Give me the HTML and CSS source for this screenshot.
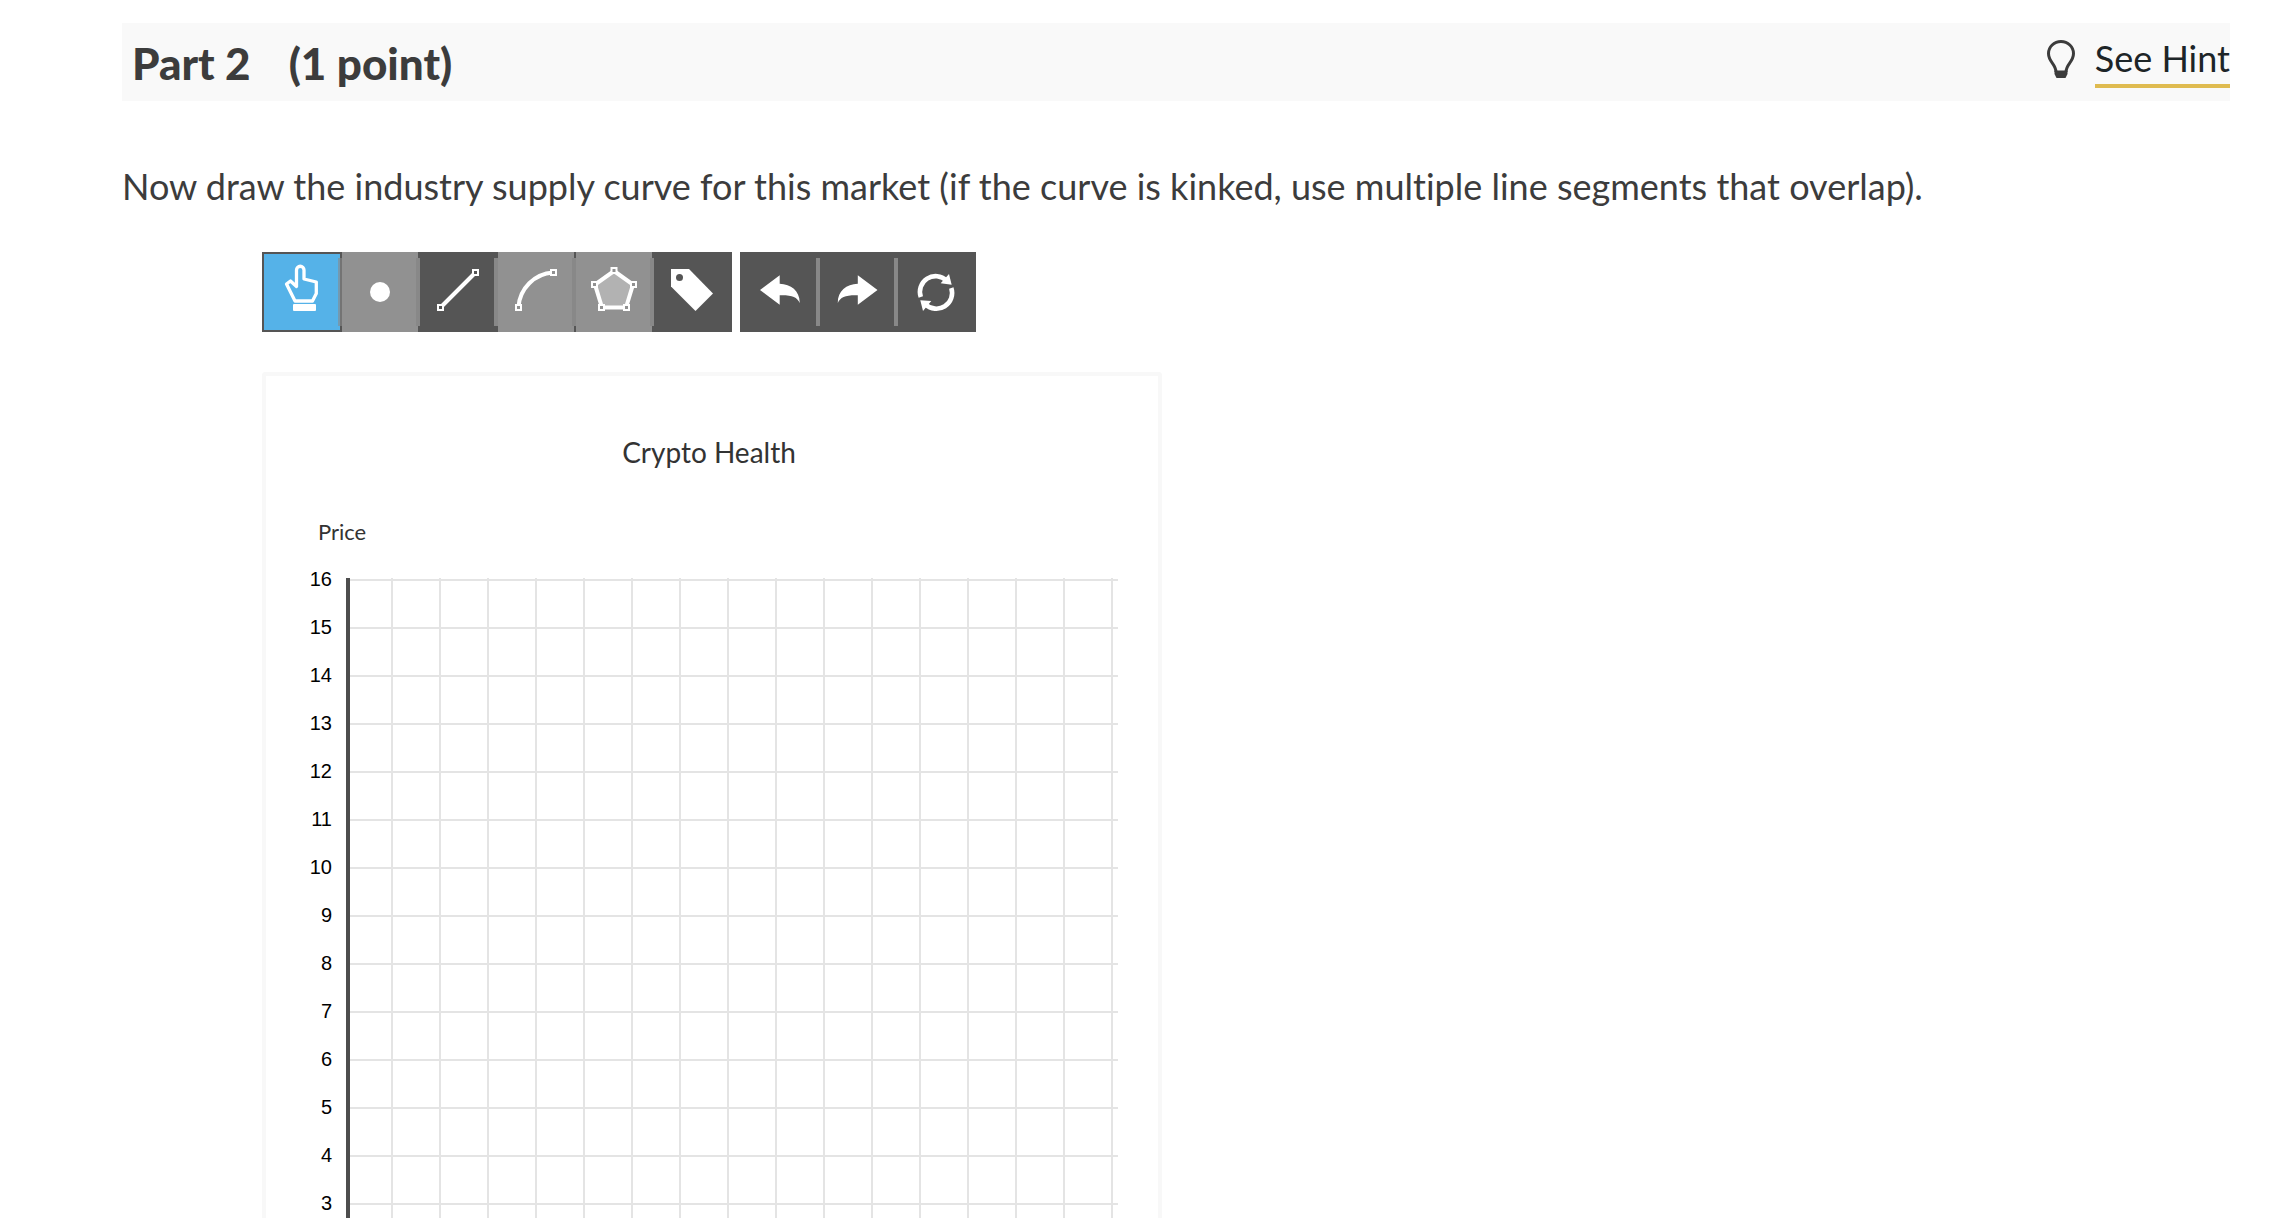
FILE: index.html
```html
<!doctype html>
<html lang="en">
<head>
	<meta charset="utf-8">
	<title>Part 2</title>
	<meta name="viewport" content="width=device-width, initial-scale=1">
	<link rel="stylesheet" href="styles.css">
</head>

<body>
	<main class="question">
		<header class="part-header">
			<h2 class="part-title"><span>Part 2</span> <span>(1 point)</span></h2>
			<div class="hint">
				<svg class="hint-icon" width="28" height="38" viewBox="0 0 28 38" aria-hidden="true">
					<path d="M9 32C9 24 1.500 22 1.500 13.500A12.500 12 0 0 1 26.500 13.500C26.500 22 19 24 19 32" fill="none" stroke="#3c3c3c" stroke-width="3"/>
					<path d="M7.500 30.500H20.500V34L18.500 38H9.500L7.500 34Z" fill="#3c3c3c"/>
				</svg>
				<a href="#hint" class="hint-link">See Hint</a>
			</div>
		</header>

		<p class="prompt">Now draw the industry supply curve for this market (if the curve is kinked, use multiple line segments that overlap).</p>

		<section class="graph">
			<div class="toolbar">
				<div class="tool-group">
					<button type="button" class="tool is-active" aria-label="Select">
						<svg viewBox="0 0 76 80">
							<path d="M22.500 32L26.500 29L32.500 34.500V18a3.750 3.750 0 0 1 7.500 0V27L52.300 30V41.500L48.500 49H31Z" fill="none" stroke="#fff" stroke-width="3.300" stroke-linejoin="round"/>
							<rect x="29" y="52" width="23" height="7" rx="1" fill="#fff"/>
						</svg>
					</button>
					<button type="button" class="tool" aria-label="Point" disabled>
						<svg viewBox="0 0 76 80"><circle cx="38" cy="40" r="10" fill="#fff"/></svg>
					</button>
					<button type="button" class="tool" aria-label="Line">
						<svg viewBox="0 0 76 80">
							<path d="M22 54L54 22" stroke="#fff" stroke-width="4"/>
							<g fill="#555" stroke="#fff" stroke-width="2">
								<rect x="18" y="53" width="5" height="5"/>
								<rect x="53" y="18" width="5" height="5"/>
							</g>
						</svg>
					</button>
					<button type="button" class="tool" aria-label="Curve" disabled>
						<svg viewBox="0 0 76 80">
							<path d="M20.500 55A37 37 0 0 1 55 20.500" fill="none" stroke="#fff" stroke-width="4"/>
							<g fill="#919191" stroke="#fff" stroke-width="2">
								<rect x="18" y="53" width="5" height="5"/>
								<rect x="53" y="18" width="5" height="5"/>
							</g>
						</svg>
					</button>
					<button type="button" class="tool" aria-label="Polygon" disabled>
						<svg viewBox="0 0 76 80">
							<path d="M38 19L57 32.500L50 55.500H26L19 32.500Z" fill="#b2b2b2" stroke="#fff" stroke-width="4"/>
							<g fill="#919191" stroke="#fff" stroke-width="2">
								<rect x="35.500" y="16" width="5" height="5"/>
								<rect x="55" y="30" width="5" height="5"/>
								<rect x="48" y="53" width="5" height="5"/>
								<rect x="23" y="53" width="5" height="5"/>
								<rect x="16" y="30" width="5" height="5"/>
							</g>
						</svg>
					</button>
					<button type="button" class="tool" aria-label="Label">
						<svg viewBox="0 0 76 80">
							<path d="M17 17H35L59 41.500L41.500 59L17 34.500Z" fill="#fff"/>
							<circle cx="25.500" cy="25.500" r="3.500" fill="#555"/>
						</svg>
					</button>
				</div>
				<div class="tool-group">
					<button type="button" class="tool" aria-label="Undo">
						<svg viewBox="0 0 76 80"><path d="M18 38L37.700 23.300V31.700C49 32 58 39 57.700 51C55 45 50 43 37.700 43.300V52.700Z" fill="#fff"/></svg>
					</button>
					<button type="button" class="tool" aria-label="Redo">
						<svg viewBox="0 0 76 80"><path d="M57.500 38L37.800 23.300V31.700C26.500 32 17.500 39 17.800 51C20.500 45 25.500 43 37.800 43.300V52.700Z" fill="#fff"/></svg>
					</button>
					<button type="button" class="tool" aria-label="Reset">
						<svg viewBox="0 0 76 80">
							<path d="M22.800 45A15.700 15.700 0 0 1 48.500 28.500M53.300 36A15.700 15.700 0 0 1 27.500 52.300" fill="none" stroke="#fff" stroke-width="4.600"/>
							<path d="M51 22L53.700 32.700L42.700 31.300ZM25 59L22.300 48.300L33.300 49Z" fill="#fff"/>
						</svg>
					</button>
				</div>
			</div>

			<div class="chart-card">
				<svg class="chart" width="892" height="846" role="img" aria-label="Crypto Health price chart">
					<defs>
						<pattern id="rows" x="0" y="203" width="48" height="48" patternUnits="userSpaceOnUse">
							<rect width="48" height="2" fill="#e4e4e4"/>
						</pattern>
						<pattern id="cols" x="125" y="0" width="48" height="48" patternUnits="userSpaceOnUse">
							<rect width="2" height="48" fill="#e4e4e4"/>
						</pattern>
					</defs>
					<text x="443" y="87" class="chart-title">Crypto Health</text>
					<text x="52" y="164" class="axis-name">Price</text>
					<rect x="84" y="203" width="768" height="643" fill="url(#rows)"/>
					<rect x="84" y="202" width="768" height="644" fill="url(#cols)"/>
					<rect x="80" y="202" width="4" height="644" fill="#4d4d4d"/>
					<g class="ticks">
						<text x="66" y="210">16</text>
						<text x="66" y="258">15</text>
						<text x="66" y="306">14</text>
						<text x="66" y="354">13</text>
						<text x="66" y="402">12</text>
						<text x="66" y="450">11</text>
						<text x="66" y="498">10</text>
						<text x="66" y="546">9</text>
						<text x="66" y="594">8</text>
						<text x="66" y="642">7</text>
						<text x="66" y="690">6</text>
						<text x="66" y="738">5</text>
						<text x="66" y="786">4</text>
						<text x="66" y="834">3</text>
					</g>
				</svg>
			</div>
		</section>
	</main>
</body>
</html>
```
FILE: styles.css
```css
* {
	box-sizing: border-box;
}
body, h2, p {
	margin: 0;
}
body {
	font-family: Lato, sans-serif;
	font-size: 36px;
	line-height: 44px;
	font-variant-ligatures: none;
	color: #3c3c3c;
	background: #fff;
}

.question {
	display: flex;
	flex-direction: column;
	height: 100vh;
	padding: 23px 54px 0 122px;
	overflow: hidden;
}

.part-header {
	display: flex;
	justify-content: space-between;
	align-items: flex-start;
	padding: 13px 0 11px 10px;
	background: #f9f9f9;
}
.part-title {
	display: flex;
	gap: 38px;
	font-family: "Lato Black", Lato, sans-serif;
	font-size: 44px;
	line-height: 54px;
	font-weight: 900;
}
.hint {
	display: flex;
	gap: 20px;
}
.hint-icon {
	margin-top: 4px;
}
.hint-link {
	padding-bottom: 4px;
	border-bottom: 4px solid #dfbb50;
	color: #1d2528;
	text-decoration: none;
}

.prompt {
	margin-top: 63px;
}

.graph {
	display: flex;
	flex: 1;
	flex-direction: column;
	min-height: 0;
	margin: 44px 0 0 140px;
}

.toolbar {
	display: flex;
	gap: 8px;
}
.tool-group {
	display: flex;
	gap: 2px;
	padding: 0 2px;
	background: #555;
}
.tool {
	position: relative;
	width: 76px;
	height: 80px;
	padding: 0;
	border: 0;
	background: #555;
	cursor: pointer;
}
.tool svg {
	display: block;
	width: 76px;
	height: 80px;
}
.tool:disabled {
	background: #919191;
	cursor: default;
}
.tool.is-active {
	background: #55b2e8;
	box-shadow: inset 0 2px #555, inset 0 -2px #555;
}
/* divider between neighbouring tools */
.tool:not(:last-child)::after {
	content: '';
	position: absolute;
	z-index: 1;
	top: 6px;
	right: -2px;
	width: 4px;
	height: 68px;
	background: #888;
}
.tool.is-active::after {
	opacity: .6;
}

.chart-card {
	flex: 1;
	min-height: 0;
	max-width: 900px;
	margin-top: 40px;
	border: 4px solid #f8f8f8;
	border-bottom: 0;
	border-radius: 4px 4px 0 0;
	overflow: hidden;
}
.chart {
	display: block;
}
.chart-title {
	font-size: 28px;
	text-anchor: middle;
	fill: #333;
}
.axis-name {
	font-size: 22px;
	fill: #333;
}
.ticks {
	font-family: "Liberation Sans", Arial, sans-serif;
	font-size: 20px;
	text-anchor: end;
	fill: #000;
}
```
